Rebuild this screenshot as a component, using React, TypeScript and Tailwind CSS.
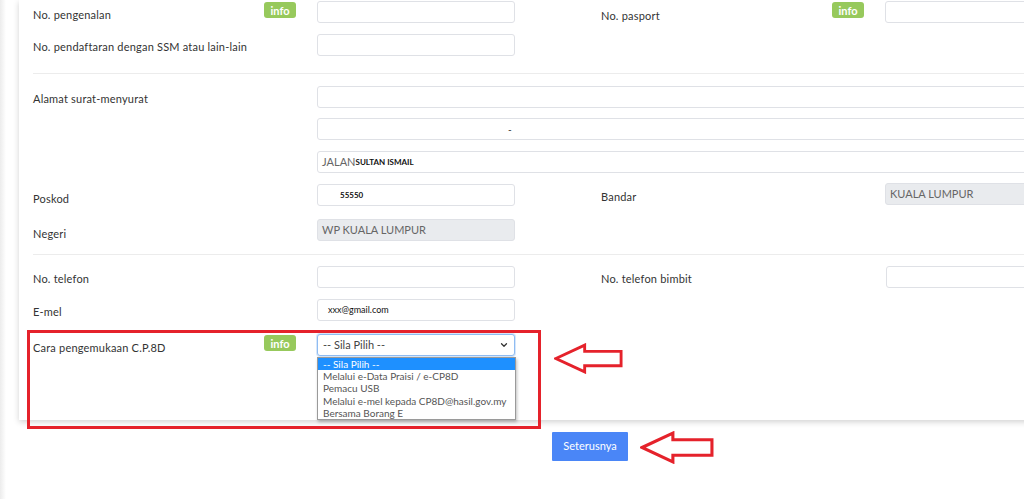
import { ChevronDown } from "lucide-react";

const font = { fontFamily: "Lato, 'Open Sans', sans-serif" };

function Info() {
  return (
    <div className="w-[32px] pt-[1px] flex">
      <span className="flex items-center justify-center w-[32px] h-[16px] rounded-[3px] bg-[#97c95c] text-white text-[11px] font-bold leading-none">
        info
      </span>
    </div>
  );
}

function Label({ children, w = "w-[231px]" }: { children: React.ReactNode; w?: string }) {
  return (
    <div className={`${w} pt-[5px] text-[11px] leading-[14px] tracking-[0.2px] text-[#333] whitespace-nowrap`}>
      {children}
    </div>
  );
}

function Input({
  w = "w-[198px]",
  disabled = false,
  children,
}: {
  w?: string;
  disabled?: boolean;
  children?: React.ReactNode;
}) {
  return (
    <div
      className={`${w} h-[22px] rounded-[3px] border border-[#dfe1e6] flex items-center px-[4px] ${
        disabled ? "bg-[#e9ebee] text-[#666]" : "bg-white text-[#222]"
      }`}
    >
      {children}
    </div>
  );
}

function LeftArrow({ className }: { className: string }) {
  return (
    <svg className={className} viewBox="0 0 72 32" fill="none">
      <path
        d="M2 16 L32 2 L32 8.5 L70 8.5 L70 23.5 L32 23.5 L32 30 Z"
        fill="white"
        stroke="#e5222b"
        strokeWidth="3"
        strokeLinejoin="miter"
      />
    </svg>
  );
}

export default function App() {
  return (
    <div className="relative w-[1024px] h-[499px] overflow-hidden bg-white flex" style={font}>
      {/* left page edge */}
      <div className="w-[6px] shrink-0 bg-gradient-to-r from-[#ececec] to-white" />

      <div className="ml-[13px] flex flex-col">
        {/* Card */}
        <div className="w-[1100px] h-[420px] bg-white shadow-[0_2px_6px_rgba(0,0,0,0.18)] pl-[14px] pt-[1px]">
          {/* Row 1 */}
          <div className="h-[22px] flex items-start">
            <div className="flex items-start">
              <div className="pt-[2px]"><Label>No. pengenalan</Label></div>
              <Info />
              <div className="ml-[21px]"><Input /></div>
            </div>
            <div className="ml-[86px] flex items-start">
              <div className="pt-[3px]"><Label>No. pasport</Label></div>
              <Info />
              <div className="ml-[21px]"><Input w="w-[200px]" /></div>
            </div>
          </div>

          {/* Row 2 */}
          <div className="mt-[11px] h-[22px] flex items-start">
            <div className="pt-[1px]"><Label w="w-[284px]">No. pendaftaran dengan SSM atau lain-lain</Label></div>
            <Input />
          </div>

          <div className="mt-[17px] h-px w-full bg-[#ececec]" />

          {/* Alamat */}
          <div className="mt-[12px] h-[22px] flex items-start">
            <div className="pt-[1px]"><Label w="w-[284px]">Alamat surat-menyurat</Label></div>
            <Input w="w-[720px]" />
          </div>
          <div className="mt-[10px] h-[22px] flex items-start">
            <div className="w-[284px]" />
            <Input w="w-[720px]">
              <span className="ml-[186px] text-[10px]">-</span>
            </Input>
          </div>
          <div className="mt-[11px] h-[22px] flex items-start">
            <div className="w-[284px]" />
            <Input w="w-[720px]">
              <span className="text-[11px] text-[#666]">JALAN</span>
              <span className="text-[8px] font-bold text-[#111]">SULTAN ISMAIL</span>
            </Input>
          </div>

          {/* Poskod / Bandar */}
          <div className="mt-[11px] h-[22px] flex items-start">
            <div className="flex items-start">
              <div className="pt-[3px]"><Label w="w-[284px]">Poskod</Label></div>
              <Input>
                <span className="ml-[18px] text-[8px] font-bold text-[#111]">55550</span>
              </Input>
            </div>
            <div className="ml-[86px] flex items-start">
              <div className="pt-[1px]"><Label w="w-[284px]">Bandar</Label></div>
              <div className="-mt-[1px]">
                <Input w="w-[200px]" disabled>
                  <span className="text-[11px]">KUALA LUMPUR</span>
                </Input>
              </div>
            </div>
          </div>

          {/* Negeri */}
          <div className="mt-[13px] h-[22px] flex items-start">
            <div className="pt-[3px]"><Label w="w-[284px]">Negeri</Label></div>
            <Input disabled>
              <span className="text-[11px]">WP KUALA LUMPUR</span>
            </Input>
          </div>

          <div className="mt-[13px] h-px w-full bg-[#ececec]" />

          {/* Telefon */}
          <div className="mt-[11px] h-[22px] flex items-start">
            <div className="flex items-start">
              <div className="pt-[1px]"><Label w="w-[284px]">No. telefon</Label></div>
              <Input />
            </div>
            <div className="ml-[86px] flex items-start">
              <div className="pt-[1px]"><Label w="w-[285px]">No. telefon bimbit</Label></div>
              <Input w="w-[200px]" />
            </div>
          </div>

          {/* E-mel */}
          <div className="mt-[11px] h-[22px] flex items-start">
            <div className="pt-[1px]"><Label w="w-[284px]">E-mel</Label></div>
            <Input>
              <span className="ml-[6px] text-[9px] text-[#111]">xxx@gmail.com</span>
            </Input>
          </div>

          {/* Cara pengemukaan */}
          <div className="mt-[13px] h-[22px] flex items-start">
            <div className="pt-[2px]"><Label>Cara pengemukaan C.P.8D</Label></div>
            <Info />
            <div className="ml-[21px] relative">
              <div className="w-[198px] h-[22px] rounded-[3px] border border-[#8fbcf2] shadow-[0_0_0_1px_rgba(140,185,240,0.35)] bg-white flex items-center justify-between px-[5px] text-[11px] text-[#444]">
                <span>-- Sila Pilih --</span>
                <ChevronDown className="w-[10px] h-[10px] text-[#333]" strokeWidth={3} />
              </div>
              <div className="absolute left-0 top-[23px] w-[199px] border border-[#9a9a9a] bg-white shadow-[1px_2px_3px_rgba(0,0,0,0.25)] text-[10px] leading-[12.2px] text-[#555] whitespace-nowrap">
                <div className="bg-[#1e90ff] text-white px-[5px]">-- Sila Pilih --</div>
                <div className="px-[5px]">Melalui e-Data Praisi / e-CP8D</div>
                <div className="px-[5px]">Pemacu USB</div>
                <div className="px-[5px]">Melalui e-mel kepada CP8D@hasil.gov.my</div>
                <div className="px-[5px]">Bersama Borang E</div>
              </div>
            </div>
          </div>
        </div>

        {/* Button */}
        <div className="mt-[12px] ml-[533px]">
          <button className="w-[76px] h-[29px] bg-[#4a86f7] text-white text-[11px] rounded-[1px]">
            Seterusnya
          </button>
        </div>
      </div>

      {/* Annotations */}
      <div className="absolute left-[27px] top-[330px] w-[514px] h-[99px] border-[3px] border-[#e5222b]" />
      <LeftArrow className="absolute left-[554px] top-[343px] w-[69px] h-[31px]" />
      <LeftArrow className="absolute left-[640px] top-[431px] w-[74px] h-[33px]" />
    </div>
  );
}
